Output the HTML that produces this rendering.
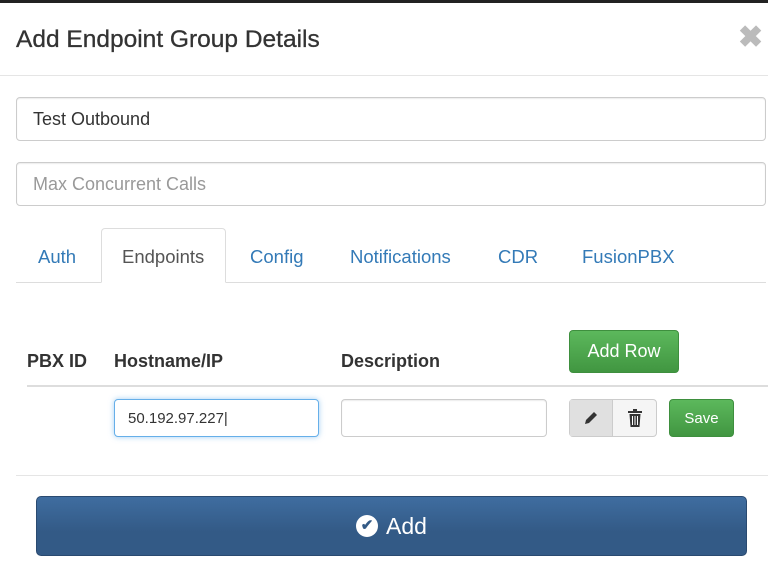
<!DOCTYPE html>
<html><head><style>
*{box-sizing:border-box;margin:0;padding:0}
body{width:768px;height:582px;background:#fff;font-family:"Liberation Sans",sans-serif;position:relative;overflow:hidden;color:#333}
.a{position:absolute}
.inp{position:absolute;border:1px solid #ccc;border-radius:4px;background:#fff;font-size:18px;padding-left:16px;display:flex;align-items:center;box-shadow:inset 0 1px 1px rgba(0,0,0,.075)}
.tab{position:absolute;top:246px;font-size:18.5px;color:#337ab7}
.th{position:absolute;top:351px;font-size:18px;font-weight:bold;color:#333}
.g{background:linear-gradient(#5cb85c,#419641);border:1px solid #3e8f3e;border-radius:4px;color:#fff;display:flex;align-items:center;justify-content:center}
</style></head><body>
<div class="a" style="left:0;top:0;width:768px;height:3px;background:#222"></div>
<div class="a" style="left:16px;top:26px;font-size:24.5px;color:#333;-webkit-text-stroke:0.3px #333">Add Endpoint Group Details</div>
<div class="a" style="left:738px;top:20px;font-size:30px;font-weight:bold;color:#bbb">✖</div>
<div class="a" style="left:0;top:75px;width:768px;height:1px;background:#e5e5e5"></div>
<div class="inp" style="left:16px;top:97px;width:750px;height:44px;color:#333">Test Outbound</div>
<div class="inp" style="left:16px;top:162px;width:750px;height:44px;color:#999">Max Concurrent Calls</div>
<div class="a" style="left:16px;top:282px;width:750px;height:1px;background:#ddd"></div>
<div class="a" style="left:101px;top:228px;width:125px;height:55px;border:1px solid #ddd;border-bottom-color:#fff;border-radius:4px 4px 0 0;background:#fff"></div>
<div class="tab" style="left:38px">Auth</div>
<div class="tab" style="left:122px;color:#555">Endpoints</div>
<div class="tab" style="left:250px">Config</div>
<div class="tab" style="left:350px">Notifications</div>
<div class="tab" style="left:498px">CDR</div>
<div class="tab" style="left:582px">FusionPBX</div>
<div class="th" style="left:27px">PBX ID</div>
<div class="th" style="left:114px">Hostname/IP</div>
<div class="th" style="left:341px">Description</div>
<div class="a g" style="left:569px;top:330px;width:110px;height:43px;font-size:18px">Add Row</div>
<div class="a" style="left:27px;top:385px;width:741px;height:2px;background:#ddd"></div>
<div class="inp" style="left:114px;top:399px;width:205px;height:38px;font-size:15px;padding-left:13px;border-color:#66afe9;box-shadow:0 0 6px rgba(102,175,233,.6)">50.192.97.227|</div>
<div class="inp" style="left:341px;top:399px;width:206px;height:38px"></div>
<div class="a" style="left:569px;top:399px;width:88px;height:38px;border:1px solid #ccc;border-radius:4px;background:#f5f5f5;display:flex">
<div style="width:43px;background:#e0e0e0;border-right:1px solid #ccc;display:flex;align-items:center;justify-content:center">
<svg width="16" height="16" viewBox="0 0 16 16"><path d="M11 2l3 3-8 8-4 1 1-4z" fill="#333"/></svg></div>
<div style="flex:1;display:flex;align-items:center;justify-content:center">
<svg width="14" height="18" viewBox="0 0 14 18"><rect x="0" y="2" width="14" height="2" fill="#333"/><rect x="5" y="0" width="4" height="2" fill="#333"/><path d="M1.5 5h11l-1 13h-9z" fill="#333"/><path d="M4.5 7v9M7 7v9M9.5 7v9" stroke="#fff" stroke-width="1"/></svg></div></div>
<div class="a g" style="left:669px;top:399px;width:65px;height:38px;font-size:15px">Save</div>
<div class="a" style="left:16px;top:475px;width:752px;height:1px;background:#e5e5e5"></div>
<div class="a" style="left:36px;top:496px;width:711px;height:60px;background:linear-gradient(#3f6da0 0%,#335a86 60%,#335a86);border:1px solid #2a4a70;border-radius:5px;display:flex;align-items:center;justify-content:center;color:#fff;font-size:23px">
<span style="display:inline-block;width:22px;height:22px;border-radius:50%;background:#fff;color:#335a86;font-size:15px;font-weight:bold;text-align:center;line-height:22px;margin-right:8px">✔</span>Add</div>
</body></html>
